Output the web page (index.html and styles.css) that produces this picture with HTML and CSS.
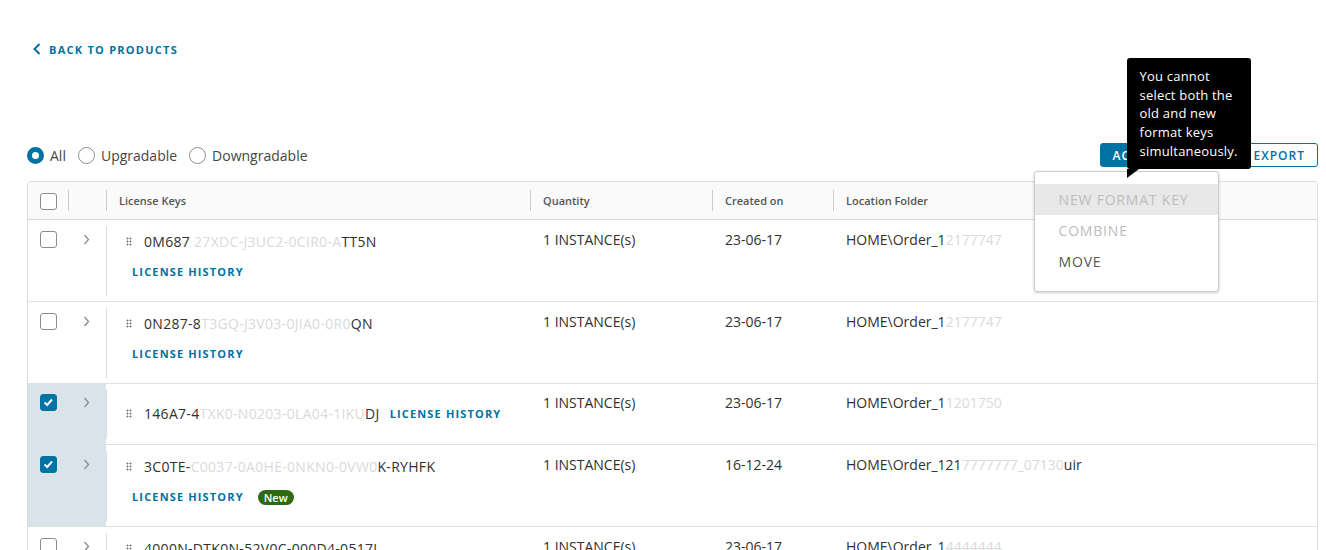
FILE: index.html
```html
<!DOCTYPE html>
<html lang="en">
<head>
	<meta charset="UTF-8">
	<title>License Keys</title>
	<link rel="stylesheet" href="styles.css">
</head>
<body>
	<div class="page">
		<a class="back" href="#">
			<svg class="back-icon" width="8" height="12" viewBox="0 0 8 12"><polyline points="6.5,1 1.5,6 6.5,11" fill="none" stroke="#0072a3" stroke-width="2"/></svg>
			BACK TO PRODUCTS
		</a>

		<div class="toolbar">
			<div class="filters">
				<label class="radio"><span class="radio-dot on"></span>All</label>
				<label class="radio"><span class="radio-dot"></span>Upgradable</label>
				<label class="radio"><span class="radio-dot"></span>Downgradable</label>
			</div>
			<div class="buttons">
				<div class="actions">
					<button class="btn btn-primary btn-actions">ACTIONS</button>
					<!-- menu open, hover on disabled item -->
					<ul class="menu">
						<li class="disabled active">NEW FORMAT KEY</li>
						<li class="disabled">COMBINE</li>
						<li>MOVE</li>
					</ul>
					<div class="tooltip">You cannot<br>select both the<br>old and new<br>format keys<br>simultaneously.</div>
				</div>
				<button class="btn btn-outline">EXPORT</button>
			</div>
		</div>

		<div class="grid">
			<div class="row head">
				<div class="h-check"><span class="cb"></span></div>
				<div class="h-cell"></div>
				<div class="h-cell">License Keys</div>
				<div class="h-cell">Quantity</div>
				<div class="h-cell">Created on</div>
				<div class="h-cell">Location Folder</div>
			</div>

			<div class="row">
				<div class="c-check"><span class="cb"></span></div>
				<div class="c-exp"><svg class="chev" width="7" height="11" viewBox="0 0 7 11"><polyline points="1.5,1 5.5,5.5 1.5,10" fill="none" stroke="#8c8c8c" stroke-width="1.3"/></svg></div>
				<div class="c-key">
					<div class="key"><span class="grip"></span>0M687&nbsp;<span class="blur">27XDC-J3UC2-0CIR0-A</span>TT5N</div>
					<div class="history-line"><a class="history" href="#">LICENSE HISTORY</a></div>
				</div>
				<div class="cell">1 INSTANCE(s)</div>
				<div class="cell">23-06-17</div>
				<div class="cell">HOME\Order_1<span class="blur">2177747</span></div>
			</div>

			<div class="row">
				<div class="c-check"><span class="cb"></span></div>
				<div class="c-exp"><svg class="chev" width="7" height="11" viewBox="0 0 7 11"><polyline points="1.5,1 5.5,5.5 1.5,10" fill="none" stroke="#8c8c8c" stroke-width="1.3"/></svg></div>
				<div class="c-key">
					<div class="key"><span class="grip"></span>0N287-8<span class="blur">T3GQ-J3V03-0JIA0-0R0</span>QN</div>
					<div class="history-line"><a class="history" href="#">LICENSE HISTORY</a></div>
				</div>
				<div class="cell">1 INSTANCE(s)</div>
				<div class="cell">23-06-17</div>
				<div class="cell">HOME\Order_1<span class="blur">2177747</span></div>
			</div>

			<div class="row sel inline">
				<div class="c-check"><span class="cb on"></span></div>
				<div class="c-exp"><svg class="chev" width="7" height="11" viewBox="0 0 7 11"><polyline points="1.5,1 5.5,5.5 1.5,10" fill="none" stroke="#8c8c8c" stroke-width="1.3"/></svg></div>
				<div class="c-key">
					<div class="key"><span class="grip"></span>146A7-4<span class="blur">TXK0-N0203-0LA04-1IKU</span>DJ<a class="history" href="#">LICENSE HISTORY</a></div>
				</div>
				<div class="cell">1 INSTANCE(s)</div>
				<div class="cell">23-06-17</div>
				<div class="cell">HOME\Order_1<span class="blur">1201750</span></div>
			</div>

			<div class="row sel">
				<div class="c-check"><span class="cb on"></span></div>
				<div class="c-exp"><svg class="chev" width="7" height="11" viewBox="0 0 7 11"><polyline points="1.5,1 5.5,5.5 1.5,10" fill="none" stroke="#8c8c8c" stroke-width="1.3"/></svg></div>
				<div class="c-key">
					<div class="key"><span class="grip"></span>3C0TE-<span class="blur">C0037-0A0HE-0NKN0-0VW0</span>K-RYHFK</div>
					<div class="history-line"><a class="history" href="#">LICENSE HISTORY</a><span class="badge">New</span></div>
				</div>
				<div class="cell">1 INSTANCE(s)</div>
				<div class="cell">16-12-24</div>
				<div class="cell">HOME\Order_121<span class="blur">7777777_07130</span>uir</div>
			</div>

			<div class="row">
				<div class="c-check"><span class="cb"></span></div>
				<div class="c-exp"><svg class="chev" width="7" height="11" viewBox="0 0 7 11"><polyline points="1.5,1 5.5,5.5 1.5,10" fill="none" stroke="#8c8c8c" stroke-width="1.3"/></svg></div>
				<div class="c-key">
					<div class="key"><span class="grip"></span>4000N-DTK0N-52V0C-000D4-0517J</div>
					<div class="history-line"><a class="history" href="#">LICENSE HISTORY</a></div>
				</div>
				<div class="cell">1 INSTANCE(s)</div>
				<div class="cell">23-06-17</div>
				<div class="cell">HOME\Order_1<span class="blur">4444444</span></div>
			</div>
		</div>
	</div>
</body>
</html>
```

FILE: styles.css
```css
* {
	box-sizing: border-box;
}
body {
	margin: 0;
	background-color: #fff;
	font-family: "Open Sans", "DejaVu Sans", sans-serif;
	color: #313131;
	overflow: hidden;
}
.page {
	padding: 0 8px 0 27px;
}

/* back link */
.back {
	display: flex;
	align-items: center;
	margin-top: 41px;
	height: 16px;
	padding-left: 6px;
	font-size: 11px;
	font-weight: 700;
	letter-spacing: 1.25px;
	color: #0072a3;
	text-decoration: none;
}
.back-icon {
	margin-right: 8px;
}

/* toolbar */
.toolbar {
	display: flex;
	justify-content: space-between;
	align-items: center;
	margin-top: 86px;
	height: 24px;
}
.filters {
	display: flex;
	align-items: center;
}
.radio {
	display: flex;
	align-items: center;
	margin-right: 12px;
	font-size: 14px;
	color: #454545;
}
.radio-dot {
	width: 17px;
	height: 17px;
	margin-right: 6px;
	border: 1px solid #8c8c8c;
	border-radius: 50%;
	background-color: #fff;
}
.radio-dot.on {
	border: 5px solid #0072a3;
}
.buttons {
	display: flex;
	align-items: center;
}
.actions {
	position: relative;
	margin-right: 12px;
}
.btn {
	height: 24px;
	padding: 0 12px;
	border-radius: 3px;
	font-family: "Open Sans", sans-serif;
	font-size: 12px;
	font-weight: 600;
	letter-spacing: 1px;
	cursor: pointer;
}
.btn-primary {
	border: 1px solid #0072a3;
	background-color: #0072a3;
	color: #fff;
}
.btn-actions {
	width: 129px;
	text-align: left;
}
.btn-outline {
	border: 1px solid #0072a3;
	background-color: #fff;
	color: #0072a3;
}

/* open menu + tooltip */
.menu {
	position: absolute;
	left: -66px;
	top: 28px;
	z-index: 5;
	width: 185px;
	margin: 0;
	padding: 12px 0 14px;
	list-style: none;
	background-color: #fff;
	border: 1px solid #ccc;
	border-radius: 3px;
	box-shadow: 0 1px 3px rgba(0, 0, 0, 0.2);
}
.menu li {
	height: 31px;
	line-height: 31px;
	padding-left: 24px;
	font-size: 14px;
	letter-spacing: 0.8px;
	color: #565656;
}
.menu li.disabled {
	color: #bdbdbd;
}
.menu li.active {
	background-color: #e8e8e8;
}
.tooltip {
	position: absolute;
	left: 27px;
	top: -85px;
	z-index: 6;
	width: 124px;
	padding: 9px 6px 8px 13px;
	background-color: #000;
	border-radius: 3px;
	color: #fff;
	font-size: 13px;
	letter-spacing: 0.2px;
	line-height: 18.75px;
	white-space: nowrap;
}
.tooltip::after {
	content: "";
	position: absolute;
	left: 0;
	top: 100%;
	border-top: 9px solid #000;
	border-right: 12px solid transparent;
}

/* datagrid */
.grid {
	margin-top: 14px;
	border: 1px solid #ddd;
	border-radius: 3px;
}
.row {
	display: grid;
	grid-template-columns: 40px 38px 424px 182px 121px 1fr;
	border-bottom: 1px solid #e1e1e1;
}
.row.head {
	height: 38px;
	align-items: center;
	background-color: #fafafa;
	border-bottom: 1px solid #d8d8d8;
}
.h-check {
	padding-left: 12px;
	padding-top: 1px;
}
.h-cell {
	position: relative;
	height: 100%;
	padding-left: 13px;
	line-height: 37px;
	font-size: 11px;
	font-weight: 600;
	color: #565656;
}
.h-cell::before {
	content: "";
	position: absolute;
	left: 0;
	top: 8px;
	bottom: 8px;
	width: 1px;
	background-color: #ccc;
}

.cb {
	display: block;
	width: 17px;
	height: 17px;
	border: 1px solid #8c8c8c;
	border-radius: 3px;
	background-color: #fff;
}
.cb.on {
	border-color: #0072a3;
	background: #0072a3 url("data:image/svg+xml,%3Csvg xmlns='http://www.w3.org/2000/svg' width='17' height='17'%3E%3Cpolyline points='4.5,8.5 7.2,11 12,5.5' fill='none' stroke='white' stroke-width='2'/%3E%3C/svg%3E") no-repeat center;
}
.c-check {
	padding: 11px 0 0 12px;
}
.c-exp {
	padding: 14px 0 0 15px;
}
.chev {
	display: block;
}
.row.sel .c-check,
.row.sel .c-exp {
	background-color: #d9e3ea;
}
.c-key {
	position: relative;
	padding: 11px 0 22px 20px;
}
.c-key::before {
	content: "";
	position: absolute;
	left: 0;
	top: 6px;
	bottom: 5px;
	width: 1px;
	background-color: #ddd;
}
.row.inline .c-key {
	padding-top: 19px;
	padding-bottom: 21px;
}
.row.inline .c-check {
	padding-top: 10px;
}
.row.inline .c-exp {
	padding-top: 13px;
}
.row.inline .cell {
	padding-top: 9px;
}
.key {
	display: flex;
	align-items: center;
	height: 20px;
	font-size: 14px;
	letter-spacing: 0.3px;
	white-space: nowrap;
}
.grip {
	width: 6px;
	height: 9px;
	margin-right: 12px;
	background-image: radial-gradient(circle, #777 0.9px, transparent 1.1px);
	background-size: 3px 3px;
}
.blur {
	color: #dadada;
}
.history-line {
	display: flex;
	align-items: center;
	height: 14px;
	margin-top: 14px;
	padding-left: 6px;
}
.history {
	display: block;
	height: 14px;
	line-height: 14px;
	font-size: 11px;
	font-weight: 700;
	letter-spacing: 1.15px;
	color: #0072a3;
	text-decoration: none;
}
.key .history {
	margin: 2px 0 0 10px;
}
.badge {
	margin-left: 14px;
	height: 15px;
	padding: 0 6px;
	line-height: 15px;
	border-radius: 8px;
	background-color: #2e6a10;
	color: #fff;
	font-size: 11px;
	font-weight: 600;
	letter-spacing: 0;
}
.cell {
	padding: 10px 0 0 13px;
	line-height: 20px;
	font-size: 14px;
	white-space: nowrap;
}
```
